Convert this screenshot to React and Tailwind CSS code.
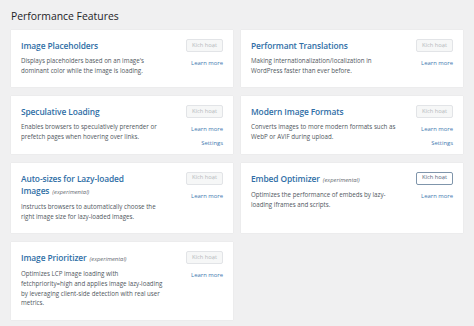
const features = [
  {
    title: 'Image Placeholders',
    desc: "Displays placeholders based on an image's dominant color while the image is loading.",
  },
  {
    title: 'Performant Translations',
    desc: 'Making internationalization/localization in WordPress faster than ever before.',
  },
  {
    title: 'Speculative Loading',
    desc: 'Enables browsers to speculatively prerender or prefetch pages when hovering over links.',
    settings: true,
  },
  {
    title: 'Modern Image Formats',
    desc: 'Converts images to more modern formats such as WebP or AVIF during upload.',
    settings: true,
  },
  {
    title: 'Auto-sizes for Lazy-loaded Images',
    desc: 'Instructs browsers to automatically choose the right image size for lazy-loaded images.',
    experimental: true,
  },
  {
    title: 'Embed Optimizer',
    desc: 'Optimizes the performance of embeds by lazy-loading iframes and scripts.',
    experimental: true,
    enabled: true,
  },
  {
    title: 'Image Prioritizer',
    desc: 'Optimizes LCP image loading with fetchpriority=high and applies image lazy-loading by leveraging client-side detection with real user metrics.',
    experimental: true,
  },
];

const FeatureCard = ({ feature }) => (
  <div className="bg-white shadow-[0_0_1px_rgba(0,0,0,0.1)] px-[10px] pt-[10px] pb-[12px] flex justify-between">
    <div className="w-[145px]">
      <h3 className="w-[130px] text-[8.4px] leading-[12px] font-semibold tracking-[-0.1px] text-[#2f6ea6]">
        {feature.title}
        {feature.experimental && (
          <span className="ml-[3px] text-[5.8px] font-normal italic tracking-normal text-[#646970]">
            (experimental)
          </span>
        )}
      </h3>
      <p className="mt-[4px] text-[6.2px] leading-[9.7px] text-[#50575e]">{feature.desc}</p>
    </div>
    <div className="-mt-[1px] -mb-[8px] flex flex-col items-end">
      <button
        className={`h-[13px] w-[37px] rounded-[2px] border text-[5.8px] leading-none ${
          feature.enabled
            ? 'border-[#7f95ab] bg-white text-[#50627a]'
            : 'border-[#e2e4e7] bg-[#f6f7f7] text-[#b4b8bc]'
        }`}
      >
        Kích hoạt
      </button>
      <a className="mt-[6px] text-[5.9px] leading-[10px] text-[#3f79b0]">Learn more</a>
      {feature.settings && (
        <a className="mt-[4px] text-[5.9px] leading-[10px] text-[#3f79b0]">Settings</a>
      )}
    </div>
  </div>
);

export default function App() {
  return (
    <div
      className="w-[474px] h-[326px] overflow-hidden bg-[#f0f0f1] px-[11px] pt-[7px]"
      style={{ fontFamily: '"Open Sans", "Noto Sans", sans-serif' }}
    >
      <h2 className="text-[10.4px] leading-[18px] text-[#1d2327]">Performance Features</h2>
      <div className="mt-[5px] grid grid-cols-2 gap-x-[8px] gap-y-[9px]">
        {features.map((f) => (
          <FeatureCard key={f.title} feature={f} />
        ))}
      </div>
    </div>
  );
}
